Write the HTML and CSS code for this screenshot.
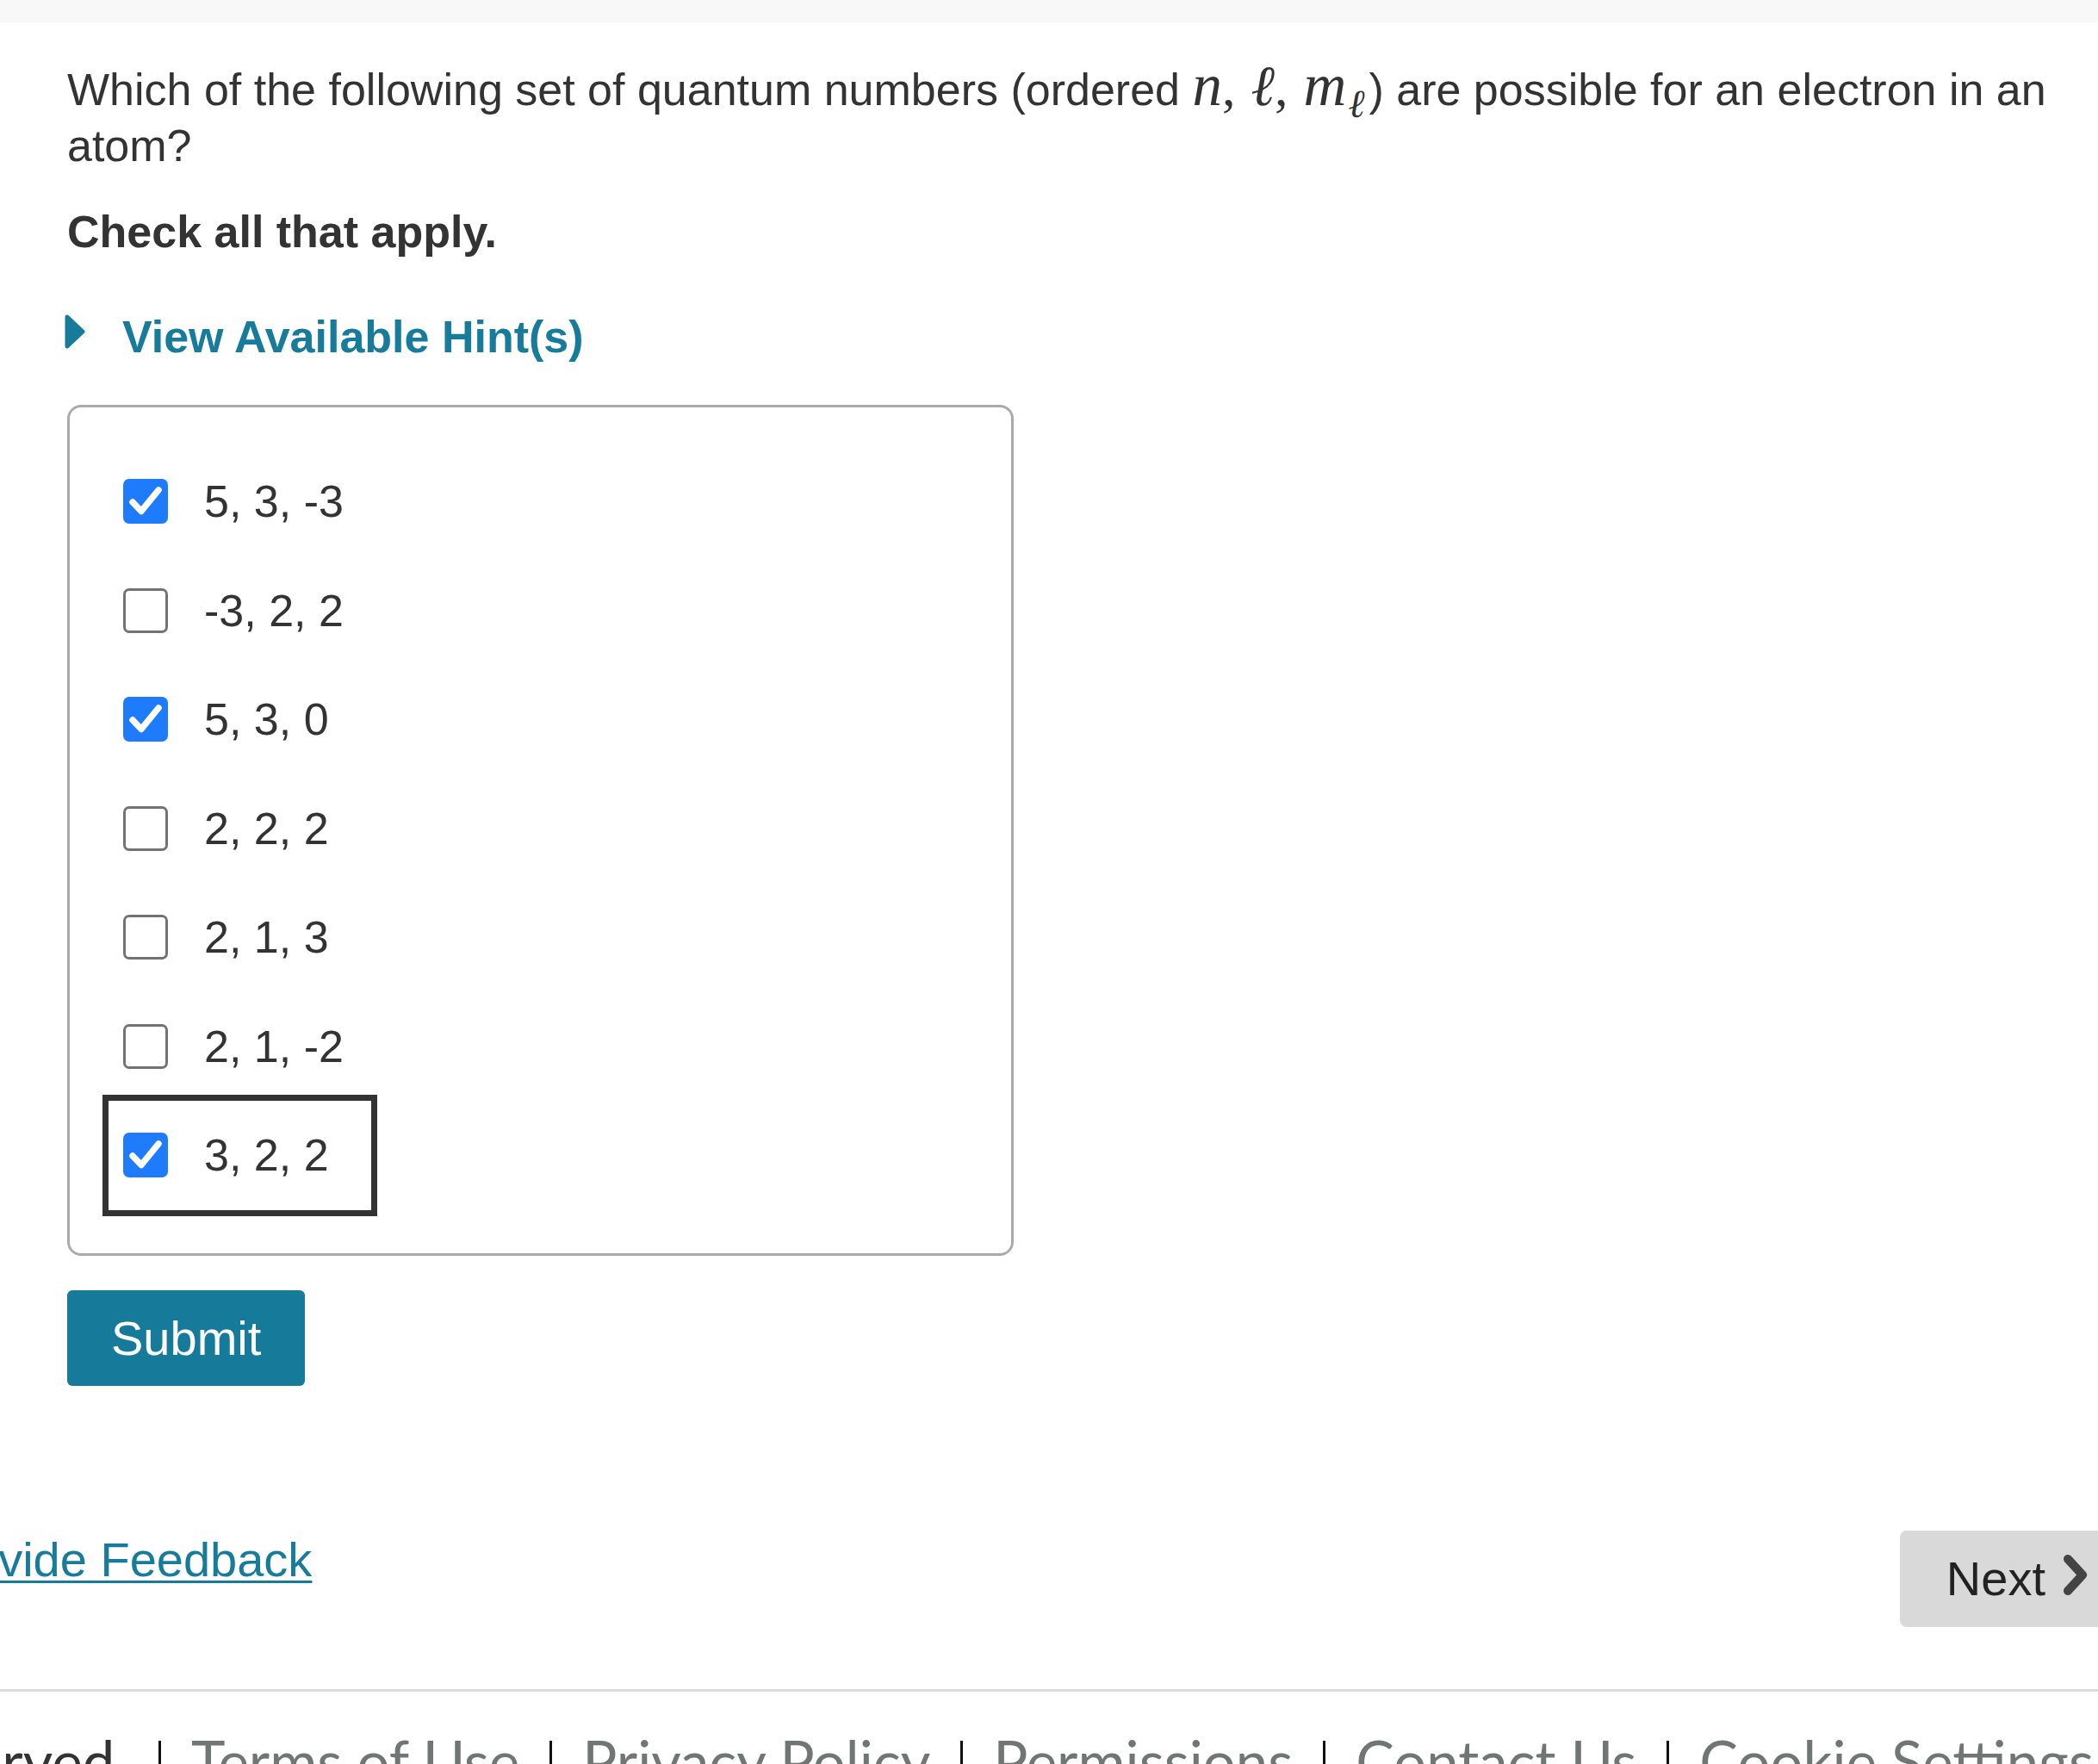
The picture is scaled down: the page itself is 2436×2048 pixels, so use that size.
FILE: index.html
```html
<!DOCTYPE html>
<html lang="en">
<head>
<meta charset="utf-8">
<title>Quantum numbers</title>
<link rel="stylesheet" href="styles.css">
</head>
<body>
<div class="topbar"></div>
<main class="content">
  <p class="question">Which of the following set of quantum numbers (ordered <span class="math"><var>n</var><span class="mp">,</span><var class="ell">ℓ</var><span class="mp">,</span><var class="m">m</var><sub>ℓ</sub></span>) are possible for an electron in an atom?</p>
  <p class="instruction">Check all that apply.</p>
  <div class="hint">
    <svg class="hint-arrow" width="24" height="40" viewBox="0 0 24 40"><polygon points="3,3 21,20 3,37" fill="#177b9b" stroke="#177b9b" stroke-width="5" stroke-linejoin="round"/></svg>
    <a class="hint-link" href="#">View Available Hint(s)</a>
  </div>
  <div class="choices">
    <label class="option"><span class="box checked"><svg width="52" height="52" viewBox="0 0 52 52"><path d="M11 27 L21 37.5 L41 13" fill="none" stroke="#fff" stroke-width="7.5" stroke-linecap="round" stroke-linejoin="round"/></svg></span><span class="opt-text">5, 3, -3</span></label>
    <label class="option"><span class="box"></span><span class="opt-text">-3, 2, 2</span></label>
    <label class="option"><span class="box checked"><svg width="52" height="52" viewBox="0 0 52 52"><path d="M11 27 L21 37.5 L41 13" fill="none" stroke="#fff" stroke-width="7.5" stroke-linecap="round" stroke-linejoin="round"/></svg></span><span class="opt-text">5, 3, 0</span></label>
    <label class="option"><span class="box"></span><span class="opt-text">2, 2, 2</span></label>
    <label class="option"><span class="box"></span><span class="opt-text">2, 1, 3</span></label>
    <label class="option"><span class="box"></span><span class="opt-text">2, 1, -2</span></label>
    <label class="option focused"><span class="box checked"><svg width="52" height="52" viewBox="0 0 52 52"><path d="M11 27 L21 37.5 L41 13" fill="none" stroke="#fff" stroke-width="7.5" stroke-linecap="round" stroke-linejoin="round"/></svg></span><span class="opt-text">3, 2, 2</span></label>
  </div>
  <button class="submit" type="button">Submit</button>
</main>
<div class="nav">
  <a class="feedback" href="#">Provide Feedback</a>
  <button class="next" type="button"><span>Next</span><svg class="chev" width="30" height="49" viewBox="0 0 30 49"><path d="M6 6 L23 24.5 L6 43" fill="none" stroke="#444" stroke-width="10" stroke-linecap="round" stroke-linejoin="round"/></svg></button>
</div>
<hr class="rule">
<footer class="footer">
  <span class="copyright"><span>Copyright © 2024 Pearson Education Inc. All rights reserved.</span></span>
  <span class="sep"></span>
  <a class="flink" href="#">Terms of Use</a>
  <span class="sep"></span>
  <a class="flink" href="#">Privacy Policy</a>
  <span class="sep"></span>
  <a class="flink" href="#">Permissions</a>
  <span class="sep"></span>
  <a class="flink" href="#">Contact Us</a>
  <span class="sep"></span>
  <a class="flink" href="#">Cookie Settings</a>
</footer>
</body>
</html>
```
FILE: styles.css
```css
html, body {
  margin: 0;
  padding: 0;
  width: 2436px;
  height: 2048px;
  overflow: hidden;
  background: #fff;
}
body {
  font-family: "Liberation Sans", Arial, Helvetica, sans-serif;
  color: #333;
}
.topbar {
  height: 26px;
  background: #f8f8f8;
}
.content {
  padding: 0 30px 0 78px;
}
.question {
  margin: 41px 0 0;
  font-size: 52px;
  line-height: 65px;
}
.math {
  font-family: "Liberation Serif", "DejaVu Serif", serif;
  font-size: 69px;
  white-space: nowrap;
}
.math var {
  font-style: italic;
}
.math .mp {
  font-style: normal;
  font-size: 62px;
  margin-right: 18px;
}
.math .ell {
  font-size: 66px;
}
.math sub {
  font-style: italic;
  font-size: 46px;
  vertical-align: -14px;
  line-height: 0;
  margin: 0 5px 0 2px;
}
.instruction {
  margin: 35px 0 0;
  font-size: 52px;
  line-height: 65px;
  font-weight: bold;
}
.hint {
  display: flex;
  align-items: flex-start;
  gap: 43px;
  margin: 57px 0 0 -3px;
}
.hint-arrow {
  margin-top: 6px;
  flex-shrink: 0;
}
.hint-link {
  font-size: 52px;
  line-height: 65px;
  font-weight: bold;
  color: #177b9b;
  text-decoration: none;
}
.choices {
  margin-top: 46px;
  width: 1099px;
  box-sizing: border-box;
  border: 3px solid #ababab;
  border-radius: 16px;
  padding: 46px 0 50px 45px;
}
.option {
  display: flex;
  align-items: center;
  gap: 42px;
  width: fit-content;
  height: 126.5px;
  padding: 0 49px 0 17px;
  font-size: 52px;
  color: #333;
}
.option.focused {
  outline: 7px solid #333;
}
.box {
  display: block;
  width: 52px;
  height: 52px;
  box-sizing: border-box;
  border: 3px solid #737373;
  border-radius: 7px;
  background: #fff;
  flex-shrink: 0;
}
.box.checked {
  border: none;
  background: #1d7bfc;
}
.box svg {
  display: block;
}
.submit {
  display: block;
  margin-top: 40px;
  height: 111px;
  padding: 0 51px;
  border: none;
  border-radius: 6px;
  background: #167a9b;
  color: #fff;
  font-family: "Liberation Sans", Arial, sans-serif;
  font-size: 56px;
}
.nav {
  display: flex;
  justify-content: space-between;
  align-items: flex-start;
  margin: 168px -19px 0 -89px;
}
.feedback {
  margin-top: 0;
  font-size: 56px;
  line-height: 67px;
  color: #177b9b;
  text-decoration: underline;
  text-decoration-thickness: 3px;
  text-underline-offset: 5px;
}
.next {
  display: flex;
  align-items: center;
  gap: 20px;
  height: 112px;
  padding: 0 30px 0 54px;
  border: none;
  border-radius: 8px;
  background: #d9d9d9;
  color: #222;
  font-family: "Liberation Sans", Arial, sans-serif;
  font-size: 56px;
}
.chev {
  margin-bottom: 8px;
}
.rule {
  margin: 72px 0 0;
  border: 0;
  height: 3px;
  background: #dcdcdc;
}
.footer {
  display: flex;
  align-items: flex-start;
  gap: 35px;
  margin-top: 43px;
  font-family: Lato, "Open Sans", sans-serif;
  font-size: 67px;
  line-height: 74px;
  color: #6f7673;
  white-space: nowrap;
}
.copyright {
  display: flex;
  justify-content: flex-end;
  width: 149px;
  overflow: hidden;
  flex-shrink: 0;
  color: #333;
}
.sep {
  width: 3px;
  height: 80px;
  margin-top: 14px;
  background: #111;
  flex-shrink: 0;
}
.flink {
  color: #6f7673;
  text-decoration: none;
  flex-shrink: 0;
}
```
